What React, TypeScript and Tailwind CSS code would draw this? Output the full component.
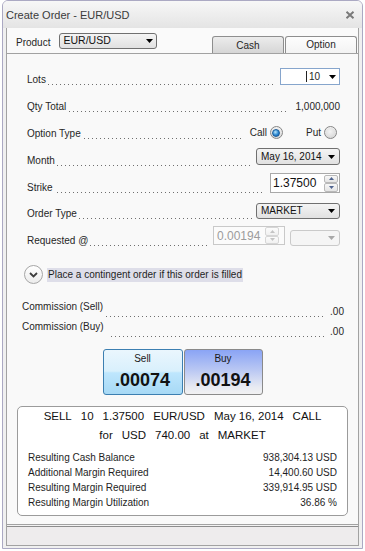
import React from "react";

const DOTS =
  "h-px flex-1 bg-[linear-gradient(to_right,#6f6f6f_1px,transparent_1px)] bg-[length:4px_1px] ";

function Dots({ className = "" }: { className?: string }) {
  return <div className={DOTS + className} />;
}

function Label({ children }: { children: React.ReactNode }) {
  return <span className="text-[10px] leading-[12px] whitespace-nowrap">{children}</span>;
}

function Arrow({ color = "#000" }: { color?: string }) {
  return (
    <svg width="7" height="4" viewBox="0 0 7 4" className="block shrink-0">
      <path d="M0 0H7L3.5 4Z" fill={color} />
    </svg>
  );
}

function Tri({ up, color }: { up: boolean; color: string }) {
  return (
    <svg width="5" height="3" viewBox="0 0 5 3" className="block">
      <path d={up ? "M0 3H5L2.5 0Z" : "M0 0H5L2.5 3Z"} fill={color} />
    </svg>
  );
}

function Spinner({ disabled }: { disabled?: boolean }) {
  const c = disabled ? "#c4c4c4" : "#50648f";
  const b = disabled
    ? "flex-1 flex items-center justify-center border border-[#d6d6d6] rounded-[2px] bg-[linear-gradient(to_bottom,#fbfbfb,#f1f1f1)]"
    : "flex-1 flex items-center justify-center border border-[#b9b9b9] rounded-[2px] bg-[linear-gradient(to_bottom,#f8f8f8,#e4e4e4)]";
  return (
    <div className="ml-auto w-[14px] h-[17px] flex flex-col">
      <div className={b}>
        <Tri up color={c} />
      </div>
      <div className={b}>
        <Tri up={false} color={c} />
      </div>
    </div>
  );
}

function Radio({ on }: { on?: boolean }) {
  return (
    <div className="w-[13px] h-[13px] rounded-full border border-[#868686] bg-[linear-gradient(to_bottom,#f2f2f2,#d9d9d9)] flex items-center justify-center">
      {on ? (
        <div className="w-[8px] h-[8px] rounded-full border border-[#1b5c9a] bg-[radial-gradient(circle_at_40%_35%,#b9e6fb,#2a86d0_55%,#135aa3)]" />
      ) : (
        <div className="w-[9px] h-[9px] rounded-full bg-[radial-gradient(circle_at_45%_40%,#f4f4f4,#d4d4d4)]" />
      )}
    </div>
  );
}

export default function App() {
  return (
    <div className="w-[365px] h-[551px] bg-white px-[2px] font-['Liberation_Sans',Arial,sans-serif] text-[#262626]">
      <div className="h-[549px] border border-[#aba9c3] rounded-t-[6px] flex flex-col bg-[#f0f0f0] overflow-hidden">
        {/* Title bar */}
        <div className="h-[27px] shrink-0 flex items-center pl-[3px] pr-[7px] bg-[linear-gradient(to_bottom,#f7f7f7,#e4e4e4)]">
          <span className="text-[11px] leading-none text-[#3b3b3b] mt-[1px]">Create Order - EUR/USD</span>
          <svg width="10" height="8" viewBox="0 0 10 8" className="ml-auto block">
            <path d="M1.5 0.8L8.5 7.2M8.5 0.8L1.5 7.2" stroke="#7a7a7a" strokeWidth="2" />
          </svg>
        </div>

        {/* Body */}
        <div className="flex-1 px-[3px] pb-[2px] flex flex-col">
          <div className="flex-1 border-x border-b border-[#a2a2a2] flex flex-col">
            {/* Product row */}
            <div className="h-[25px] shrink-0 flex items-start bg-[#fafafa]">
              <span className="ml-[9px] mt-[9px] text-[10px] leading-[12px]">Product</span>
              <div className="ml-[9px] mt-[5px] w-[98px] h-[16px] border border-[#707070] rounded-[3px] bg-[linear-gradient(to_bottom,#f4f4f4,#e1e1e1)] flex items-center pl-[3px] pr-[3px]">
                <span className="text-[10.5px] leading-none text-[#111] -mt-[2px]">EUR/USD</span>
                <span className="ml-auto">
                  <Arrow />
                </span>
              </div>
              <div className="ml-auto self-end flex gap-px mr-px">
                <div className="w-[72px] h-[17px] border border-b-0 border-[#8e8e8e] rounded-t-[3px] bg-[linear-gradient(to_bottom,#ececec,#d6d6d6)] flex items-center justify-center">
                  <span className="text-[10px] leading-none mt-[1px]">Cash</span>
                </div>
                <div className="w-[72px] h-[17px] border border-b-0 border-[#8e8e8e] rounded-t-[3px] bg-[linear-gradient(to_bottom,#fdfdfd,#f3f3f3)] flex items-center justify-center">
                  <span className="text-[10px] leading-none">Option</span>
                </div>
              </div>
            </div>

            {/* Panel */}
            <div className="h-[472px] shrink-0 border-y border-[#a2a2a2] bg-[#f9f9f9] flex flex-col">
              {/* Lots */}
              <div className="mt-[14px] h-[18px] flex items-end pl-[20px] pr-[18px]">
                <Label>Lots</Label>
                <Dots className="ml-[2px] mr-[4px] mb-[1px]" />
                <div className="mb-[1px] w-[60px] min-w-[60px] h-[17px] shrink-0 border border-[#86a5cc] bg-white flex items-center pl-[25px]">
                  <div className="w-px h-[11px] bg-[#222] mr-[2px] shrink-0" />
                  <span className="text-[10px] leading-none w-[12px] shrink-0">10</span>
                  <div className="w-[8px] shrink-0" />
                  <Arrow />
                </div>
              </div>

              {/* Qty Total */}
              <div className="mt-[15px] h-[12px] flex items-end pl-[20px] pr-[18px]">
                <Label>Qty Total</Label>
                <Dots className="ml-[3px] mr-[7px] mb-[1px]" />
                <span className="text-[10px] leading-[12px]">1,000,000</span>
              </div>

              {/* Option Type */}
              <div className="mt-[13px] h-[14px] flex items-end pl-[20px] pr-[18px]">
                <Label>Option Type</Label>
                <Dots className="ml-[3px] mr-[7px] mb-[1px]" />
                <div className="mb-[1px] h-[13px] flex items-center mr-[3px]">
                  <span className="text-[10px] leading-none">Call</span>
                  <div className="ml-[3px]">
                    <Radio on />
                  </div>
                  <span className="ml-[23px] text-[10px] leading-none">Put</span>
                  <div className="ml-[3px]">
                    <Radio />
                  </div>
                </div>
              </div>

              {/* Month */}
              <div className="mt-[8px] h-[19px] flex items-end pl-[20px] pr-[18px]">
                <Label>Month</Label>
                <Dots className="ml-[2px] mr-[3px] mb-[1px]" />
                <div className="mb-[2px] w-[84px] h-[17px] border border-[#707070] rounded-[3px] bg-[linear-gradient(to_bottom,#f4f4f4,#e1e1e1)] flex items-center pl-[4px] pr-[4px]">
                  <span className="text-[10px] leading-none text-[#111]">May 16, 2014</span>
                  <span className="ml-auto">
                    <Arrow />
                  </span>
                </div>
              </div>

              {/* Strike */}
              <div className="mt-[6px] h-[21px] flex items-end pl-[20px] pr-[18px]">
                <Label>Strike</Label>
                <Dots className="ml-[4px] mr-[5px] mb-[1px]" />
                <div className="mb-[1px] w-[70px] h-[20px] border border-[#a9a9a9] bg-white flex items-center pl-[2px] pr-px">
                  <span className="text-[12px] leading-none text-[#111]">1.37500</span>
                  <Spinner />
                </div>
              </div>

              {/* Order Type */}
              <div className="mt-[9px] h-[17px] flex items-end pl-[20px] pr-[18px]">
                <Label>Order Type</Label>
                <Dots className="ml-[2px] mr-[3px] mb-[1px]" />
                <div className="mb-[1px] w-[84px] h-[16px] border border-[#707070] rounded-[3px] bg-[linear-gradient(to_bottom,#f4f4f4,#e1e1e1)] flex items-center pl-[4px] pr-[4px]">
                  <span className="text-[10px] leading-none text-[#111]">MARKET</span>
                  <span className="ml-auto">
                    <Arrow />
                  </span>
                </div>
              </div>

              {/* Requested @ */}
              <div className="mt-[6px] h-[21px] flex items-end pl-[20px] pr-[18px]">
                <Label>Requested @</Label>
                <Dots className="ml-[2px] mr-[5px] mb-[1px]" />
                <div className="mb-[2px] w-[72px] h-[19px] border border-[#c9c9c9] bg-[#fbfbfb] flex items-center pl-[3px] pr-[5px]">
                  <span className="text-[12px] leading-none text-[#9c9c9c]">0.00194</span>
                  <Spinner disabled />
                </div>
                <div className="ml-[5px] mb-[1px] w-[50px] h-[16px] border border-[#cacaca] rounded-[3px] bg-[#f5f5f5] flex items-center justify-end pr-[4px]">
                  <Arrow color="#a8a8a8" />
                </div>
              </div>

              {/* Contingent */}
              <div className="mt-[18px] h-[19px] flex items-center pl-[17px]">
                <div className="w-[19px] h-[19px] rounded-full border border-[#a6a6a6] bg-[linear-gradient(to_bottom,#ffffff,#ececec)] flex items-center justify-center">
                  <svg width="9" height="6" viewBox="0 0 9 6" className="block mt-px">
                    <path d="M1 1L4.5 4.5L8 1" stroke="#3d3d3d" strokeWidth="1.8" fill="none" />
                  </svg>
                </div>
                <div className="ml-[4px] h-[14px] bg-[#dedee9] px-px flex items-center">
                  <span className="text-[10px] leading-none text-[#1e1e1e]">
                    Place a contingent order if this order is filled
                  </span>
                </div>
              </div>

              {/* Commission (Sell) */}
              <div className="mt-[17px] h-[18px] flex pl-[15px] pr-[14px]">
                <span className="self-start text-[10px] leading-[12px] whitespace-nowrap">Commission (Sell)</span>
                <Dots className="self-end ml-[3px] mr-[6px] mb-[2px]" />
                <span className="self-end mb-[1px] text-[10px] leading-[12px]">.00</span>
              </div>

              {/* Commission (Buy) */}
              <div className="mt-[2px] h-[18px] flex pl-[15px] pr-[14px]">
                <span className="self-start text-[10px] leading-[12px] whitespace-nowrap">Commission (Buy)</span>
                <div className="w-[4px]" />
                <Dots className="self-end ml-[3px] mr-[6px] mb-[2px]" />
                <span className="self-end mb-[1px] text-[10px] leading-[12px]">.00</span>
              </div>

              {/* Buttons */}
              <div className="mt-[10px] flex justify-center gap-px">
                <div className="w-[80px] h-[46px] border border-[#3c7fb1] rounded-[3px] bg-[linear-gradient(to_bottom,#eaf6fd_0%,#d9f0fc_48%,#bee6fd_52%,#a7d9f5_100%)] flex flex-col items-center pt-[3px]">
                  <span className="text-[10px] leading-[12px] text-[#1a1a1a]">Sell</span>
                  <span className="mt-[4px] text-[18px] leading-[22px] font-bold text-[#111]">.00074</span>
                </div>
                <div className="w-[79px] h-[46px] border border-[#8a8a8a] rounded-[3px] bg-[linear-gradient(to_bottom,#8aa4f5_0%,#b9c7f3_45%,#e9ebf2_85%,#f1f1f2_100%)] flex flex-col items-center pt-[3px]">
                  <span className="text-[10px] leading-[12px] text-[#1a1a1a]">Buy</span>
                  <span className="mt-[4px] text-[18px] leading-[22px] font-bold text-[#111]">.00194</span>
                </div>
              </div>

              {/* Summary */}
              <div className="mt-[11px] mx-[10px] h-[110px] border border-[#9b9b9b] rounded-[5px] bg-white">
                <div className="flex justify-center gap-[9px] text-[11.5px] leading-[19px] text-[#111]">
                  <span>SELL</span>
                  <span>10</span>
                  <span>1.37500</span>
                  <span>EUR/USD</span>
                  <span>May 16, 2014</span>
                  <span>CALL</span>
                </div>
                <div className="flex justify-center gap-[9px] text-[11.5px] leading-[19px] text-[#111]">
                  <span>for</span>
                  <span>USD</span>
                  <span>740.00</span>
                  <span>at</span>
                  <span>MARKET</span>
                </div>
                <div className="mt-[5px] px-[10px] text-[10px] leading-[15px] text-[#1e1e1e]">
                  <div className="flex justify-between">
                    <span>Resulting Cash Balance</span>
                    <span>938,304.13 USD</span>
                  </div>
                  <div className="flex justify-between">
                    <span>Additional Margin Required</span>
                    <span>14,400.60 USD</span>
                  </div>
                  <div className="flex justify-between">
                    <span>Resulting Margin Required</span>
                    <span>339,914.95 USD</span>
                  </div>
                  <div className="flex justify-between">
                    <span>Resulting Margin Utilization</span>
                    <span>36.86 %</span>
                  </div>
                </div>
              </div>
            </div>

            <div className="h-px shrink-0 bg-[#f3f3f3]" />
            {/* Footer */}
            <div className="flex-1 border-t border-[#8d8d8d] bg-[#eeeced]" />
          </div>
        </div>
      </div>
    </div>
  );
}
